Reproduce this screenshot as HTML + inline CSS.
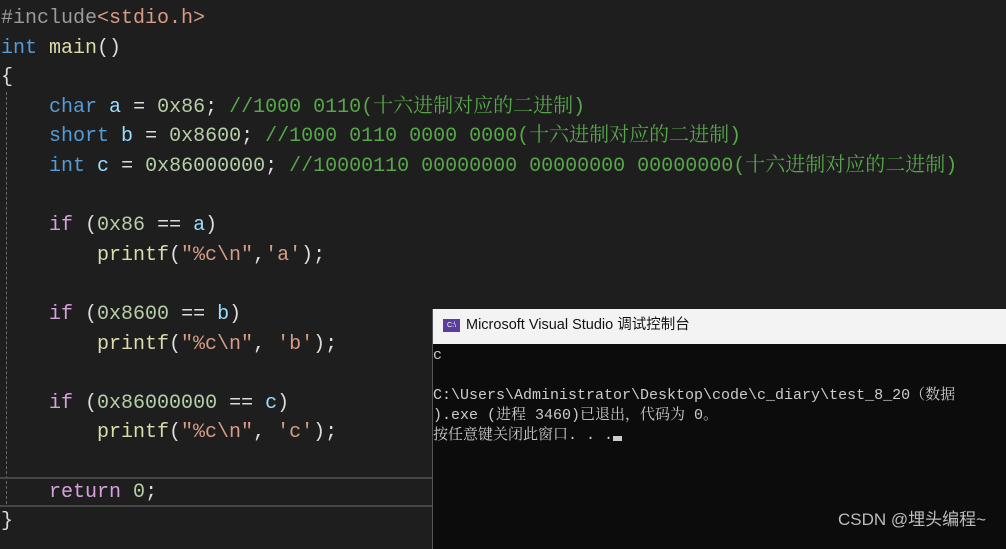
<!DOCTYPE html>
<html><head><meta charset="utf-8"><style>
body{margin:0;width:1006px;height:537px;background:#1e1e1e;overflow:hidden;position:relative;font-family:"Liberation Mono","Noto Serif CJK SC",monospace}
.code{position:absolute;left:1px;top:4px;font-size:20px;line-height:29.6px;color:#dcdcdc;white-space:pre}
.k{color:#569cd6}.v{color:#9cdcfe}.n{color:#b5cea8}.c{color:#57a64a}.f{color:#dcdcaa}.s{color:#d69d85}.p{color:#d8a0df}.g{color:#9b9b9b}
.guide{position:absolute;left:6px;top:92px;height:412px;border-left:1px dashed #6a6a6a}
.cur{position:absolute;left:0;top:477px;width:432px;height:26px;border:2px solid #464646;border-left:none}
.win{position:absolute;left:432px;top:309px;width:580px;height:240px;background:#0c0c0c;border-left:1px solid #555}
.title{height:35px;background:#f3f3f3;font-family:"Liberation Sans","Noto Sans CJK SC",sans-serif;font-size:14.5px;color:#111;line-height:33px;padding-left:33px;position:relative}
.ico{position:absolute;left:10px;top:10px;width:17px;height:13px;background:#5b3d9e;color:#fff;font-size:7px;line-height:13px;text-align:center}
.con{color:#cccccc;font-family:"Liberation Mono","Noto Serif CJK SC",monospace;font-size:15px;line-height:20px;white-space:pre;padding-top:2px}
.cursor{display:inline-block;width:9px;height:5px;background:#ccc;vertical-align:-2px}
.wm{position:absolute;left:838px;top:505px;color:#bdbdbd;font-family:"Liberation Sans","Noto Sans CJK SC",sans-serif;font-size:17px}
</style></head><body>
<div class="code"><span class="g">#include</span><span class="s">&lt;stdio.h&gt;</span>
<span class="k">int</span> <span class="f">main</span>()
{
    <span class="k">char</span> <span class="v">a</span> = <span class="n">0x86</span>; <span class="c">//1000 0110(十六进制对应的二进制)</span>
    <span class="k">short</span> <span class="v">b</span> = <span class="n">0x8600</span>; <span class="c">//1000 0110 0000 0000(十六进制对应的二进制)</span>
    <span class="k">int</span> <span class="v">c</span> = <span class="n">0x86000000</span>; <span class="c">//10000110 00000000 00000000 00000000(十六进制对应的二进制)</span>

    <span class="p">if</span> (<span class="n">0x86</span> == <span class="v">a</span>)
        <span class="f">printf</span>(<span class="s">"%c\n"</span>,<span class="s">'a'</span>);

    <span class="p">if</span> (<span class="n">0x8600</span> == <span class="v">b</span>)
        <span class="f">printf</span>(<span class="s">"%c\n"</span>, <span class="s">'b'</span>);

    <span class="p">if</span> (<span class="n">0x86000000</span> == <span class="v">c</span>)
        <span class="f">printf</span>(<span class="s">"%c\n"</span>, <span class="s">'c'</span>);

    <span class="p">return</span> <span class="n">0</span>;
}</div>
<div class="guide"></div>
<div class="cur"></div>
<div class="win"><div class="title"><span class="ico">C:\</span>Microsoft Visual Studio 调试控制台</div>
<div class="con">c

C:\Users\Administrator\Desktop\code\c_diary\test_8_20（数据
).exe (进程 3460)已退出，代码为 0。
按任意键关闭此窗口. . .<span class="cursor"></span></div></div>
<div class="wm">CSDN @埋头编程~</div>
</body></html>
